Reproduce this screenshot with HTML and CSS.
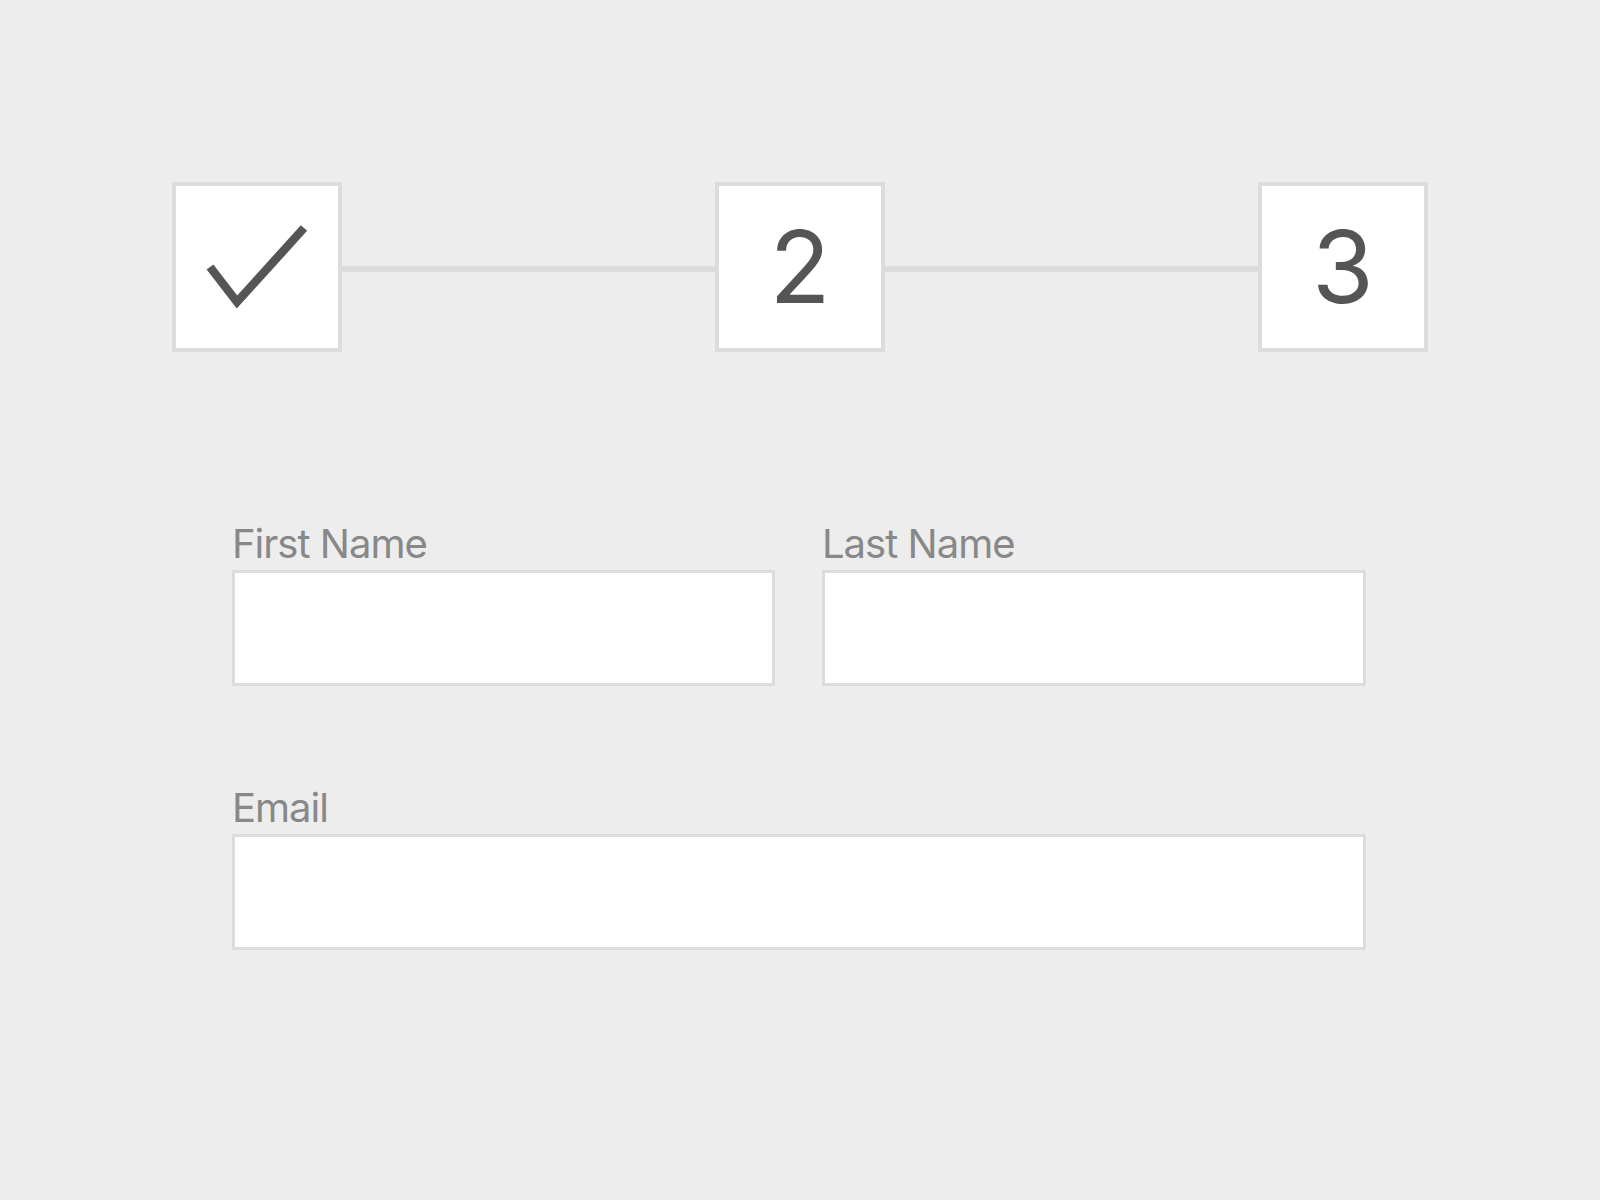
FILE: index.html
```html
<!DOCTYPE html>
<html lang="en">
<head>
<meta charset="utf-8">
<title>Signup steps</title>
<link rel="stylesheet" href="styles.css">
</head>
<body>
<div class="page">
  <div class="stepper">
    <div class="step">
      <svg class="check" width="162" height="162" viewBox="0 0 162 162" aria-hidden="true">
        <polyline points="34,81 61,116 128,42" fill="none" stroke="#555555" stroke-width="8.5" stroke-linecap="butt" stroke-linejoin="miter"/>
      </svg>
    </div>
    <div class="connector"></div>
    <div class="step"><span class="num">2</span></div>
    <div class="connector"></div>
    <div class="step"><span class="num">3</span></div>
  </div>

  <form class="form">
    <div class="row">
      <div class="field">
        <label class="label">First Name</label>
        <div class="input"></div>
      </div>
      <div class="field">
        <label class="label">Last Name</label>
        <div class="input"></div>
      </div>
    </div>
    <div class="field email">
      <label class="label">Email</label>
      <div class="input"></div>
    </div>
  </form>
</div>
</body>
</html>
```

FILE: styles.css
```css
html, body {
  margin: 0;
  padding: 0;
  background: #ededed;
}

body {
  font-family: Inter, "Liberation Sans", sans-serif;
}

.page {
  width: 1600px;
  height: 1200px;
  padding-top: 182px;
  box-sizing: border-box;
}

.stepper {
  width: 1256px;
  margin: 0 auto;
  display: flex;
  align-items: flex-start;
}

.step {
  width: 170px;
  height: 170px;
  flex: none;
  box-sizing: border-box;
  border: 4px solid #dcdcdc;
  background: #ffffff;
  display: flex;
  align-items: center;
  justify-content: center;
}

.check {
  display: block;
}

.num {
  font-size: 100px;
  line-height: 1;
  color: #555555;
  font-weight: 400;
}

.connector {
  flex: 1;
  height: 6px;
  margin-top: 84px;
  background: #dcdcdc;
}

.form {
  width: 1134px;
  margin: 166px 0 0 232px;
}

.row {
  display: grid;
  grid-template-columns: 543px 544px;
  column-gap: 47px;
}

.field {
  display: flex;
  flex-direction: column;
}

.email {
  margin-top: 96px;
}

.label {
  font-size: 40px;
  line-height: 48px;
  color: #888888;
  padding-top: 2px;
  margin-bottom: 2px;
  letter-spacing: -1px;
}

.input {
  height: 116px;
  box-sizing: border-box;
  border: 3px solid #dcdcdc;
  background: #ffffff;
}
```
